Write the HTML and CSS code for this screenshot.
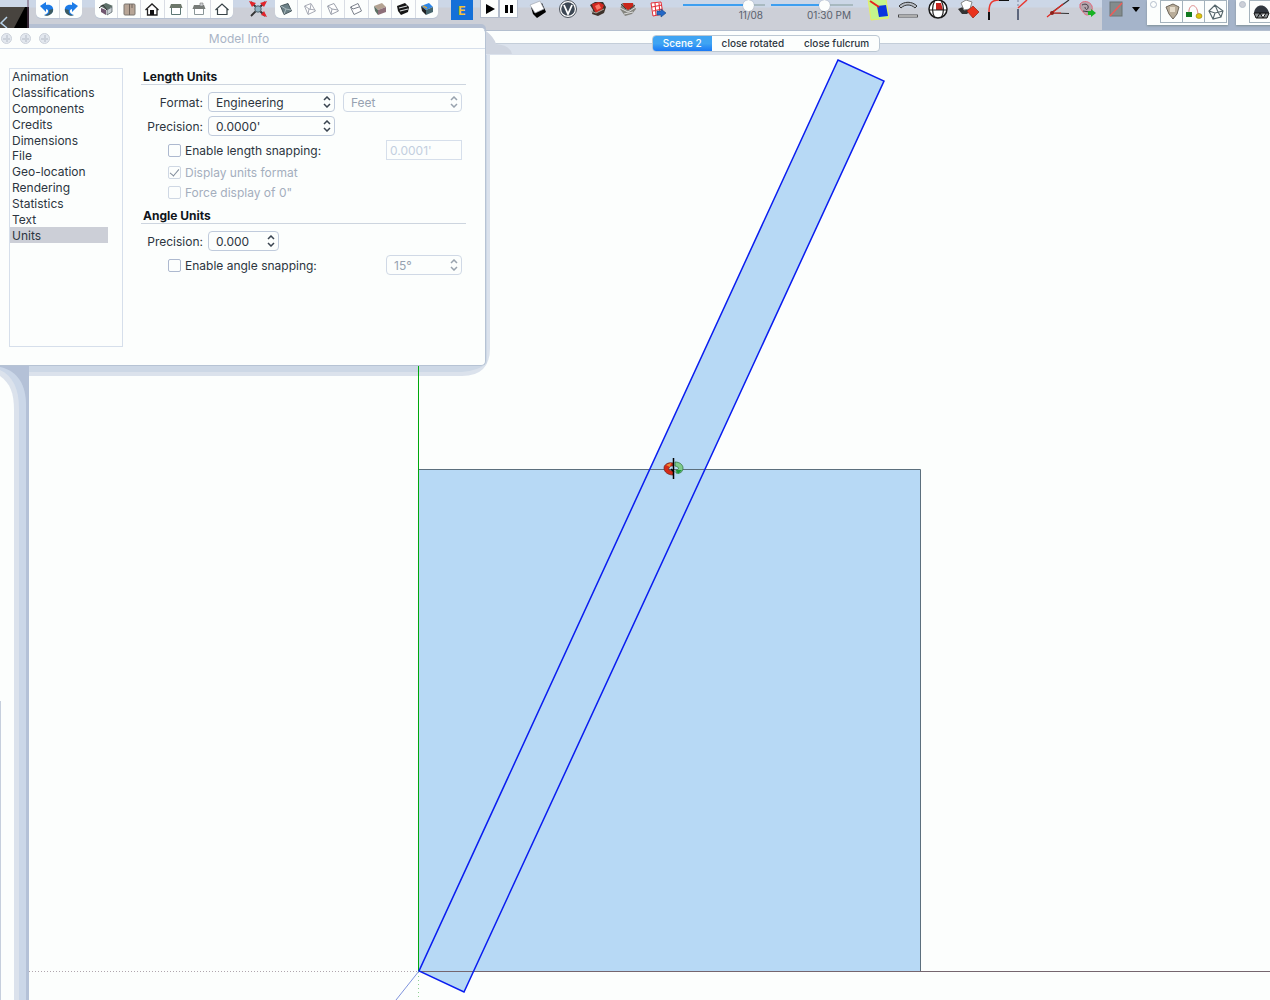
FILE: index.html
```html
<!DOCTYPE html>
<html lang="en">
<head>
  <meta charset="UTF-8" />
  <title>Model Info</title>
  <link rel="stylesheet" href="styles.css">
</head>
<body>
  <header class="toolbar">
    <button class="corner" aria-label="Back">
      <svg width="29" height="28" viewBox="0 0 29 28"><path d="M0 7H29V28H0z" fill="#000"/><path d="M0 7H25L14 28H0z" fill="#48443f"/><path d="M7 17L1 23L7 28" fill="none" stroke="#b9d3ea" stroke-width="1.5"/><path d="M28 0V28" stroke="#6b4a68"/></svg>
    </button>

    <div class="group undo">
      <button aria-label="Undo"><svg width="16" height="16" viewBox="0 0 16 16"><path d="M1 5L7 1V4C12 3 15 6 14 10C13 13 9 15 5 14C9 13 11 9 7 8V11z" fill="#1b7be8"/><path d="M14 8C15 12 10 16 5 14.500C9 14 11 12 10 9" fill="#3d5b60"/></svg></button>
      <button aria-label="Redo"><svg width="16" height="16" viewBox="0 0 16 16"><path d="M15 5L9 1V4C4 3 1 6 2 10C3 13 7 15 11 14C7 13 5 9 9 8V11z" fill="#1b7be8"/><path d="M2 8C1 12 6 16 11 14.500C7 14 5 12 6 9" fill="#3d5b60"/></svg></button>
    </div>

    <div class="group views">
      <button aria-label="Iso"><svg width="16" height="16" viewBox="0 0 16 16"><path d="M2 5L8 2L15 5L9 9z" fill="#5d7068"/><path d="M3 7V11L8 14V9z" fill="#705770"/><path d="M9 9L14 6V11L9 14z" fill="#c9d0d4" stroke="#47565a" stroke-width=".7"/><path d="M1 7L5 4L9 9" fill="none" stroke="#333"/></svg></button>
      <button aria-label="Top"><svg width="16" height="16" viewBox="0 0 16 16"><rect x="3" y="3" width="11" height="11" rx="1" fill="#b7a596" stroke="#7b7770"/><path d="M8.500 3V14M11 3V7" stroke="#71665e"/></svg></button>
      <button aria-label="Front"><svg width="16" height="16" viewBox="0 0 16 16"><path d="M1.500 9L8 3L14.500 9M3.500 8V14H13V8" fill="#fff" stroke="#222" stroke-width="1.300"/><path d="M6 14V9H10V14z" fill="#111"/></svg></button>
      <button aria-label="Right"><svg width="16" height="16" viewBox="0 0 16 16"><path d="M3 3H13L14.500 7H1.500z" fill="#6c776a"/><path d="M3.500 7V13.500H12.500V7" fill="#fff" stroke="#5c7774"/></svg></button>
      <button aria-label="Back view"><svg width="16" height="16" viewBox="0 0 16 16"><path d="M3 4H13L14.500 8H1.500z" fill="#777c78"/><path d="M9 2H12V5H9z" fill="#cfd3d4" stroke="#777" stroke-width=".6"/><path d="M3.500 8V13.500H12.500V8" fill="#fff" stroke="#8a9798"/></svg></button>
      <button aria-label="Left"><svg width="16" height="16" viewBox="0 0 16 16"><path d="M1.500 9L8 3L14.500 9M3.500 8V13.500H13V8" fill="#fff" stroke="#374347" stroke-width="1.200"/></svg></button>
    </div>

    <button class="extents" aria-label="Zoom extents"><svg width="18" height="18" viewBox="0 0 18 18"><path d="M2 16L7 11M16 16L11 11M2 2L7 7M16 2L11 7" stroke="#333" stroke-width="1.800"/><path d="M0 1L7 3L3 7zM18 1L11 3L15 7zM18 17L12 15L15 11z" fill="#e3252b"/><circle cx="9" cy="9" r="3.200" fill="#8fb2c2" stroke="#53656f"/></svg></button>

    <div class="group styles">
      <button aria-label="X-ray"><svg width="16" height="16" viewBox="0 0 16 16"><path d="M2.500 5L10 2.500L13.500 10L6 13.500z" fill="#6c8187" stroke="#48585d"/><path d="M3 5L8 8L13 9M8 8L6 13" fill="none" stroke="#a9b9bd"/></svg></button>
      <button aria-label="Back edges"><svg width="16" height="16" viewBox="0 0 16 16"><path d="M2.500 5L9 2.500L13.500 10L6 13.500zM3 5L7 8L13 9M7 8L6 13M9 3L8 9" fill="#fff" stroke="#a7abb5"/></svg></button>
      <button aria-label="Wireframe"><svg width="16" height="16" viewBox="0 0 16 16"><path d="M2.500 5L9 2.500L13.500 10L6 13.500zM3 5L7 8L13 9M7 8L6 13" fill="#fff" stroke="#9da2ad"/></svg></button>
      <button aria-label="Hidden line"><svg width="16" height="16" viewBox="0 0 16 16"><path d="M2.500 6L10 2.500L13.500 10L6 13.500zM3 6L5 8L11 6" fill="#fff" stroke="#7c828c"/></svg></button>
      <button aria-label="Shaded"><svg width="16" height="16" viewBox="0 0 16 16"><path d="M2 5L10 2L14 6L6 9z" fill="#b4a392"/><path d="M2 5L6 9V14L3 10z" fill="#5d7064"/><path d="M6 9L14 6V11L6 14z" fill="#8d6f79"/></svg></button>
      <button aria-label="Textured"><svg width="16" height="16" viewBox="0 0 16 16"><path d="M2 5L10 2L14 6L13 11L6 14L3 10z" fill="#151515"/><path d="M4 7L12 5M5 10L13 8" stroke="#d5d8d9" stroke-width="1.200"/></svg></button>
      <button aria-label="Monochrome"><svg width="16" height="16" viewBox="0 0 16 16"><path d="M2 5L10 2L14 6L7 9z" fill="#2c86e8"/><path d="M2 5L7 9V14L3 10z" fill="#222"/><path d="M7 9L14 6V11L7 14z" fill="#47666d"/><path d="M4 5L8 7" stroke="#c9a44d" stroke-width="1.500"/></svg></button>
    </div>

    <button class="ext-e">E</button>
    <div class="player">
      <button aria-label="Play"><svg width="10" height="10" viewBox="0 0 10 10"><path d="M1 0L10 5L1 10z" fill="#000"/></svg></button>
      <button aria-label="Pause"><svg width="10" height="10" viewBox="0 0 10 10"><path d="M1 1H4V9H1zM6 1H9V9H6z" fill="#000"/></svg></button>
    </div>

    <div class="tools">
      <button aria-label="Eraser"><svg width="20" height="20" viewBox="0 0 20 20"><path d="M3 7L14 3L18 12L9 18L5 14z" fill="#000"/><path d="M2 5L12 1L16 9L7 13z" fill="#fff" stroke="#a4a9b3" stroke-width=".7"/></svg></button>
      <button aria-label="V-Ray"><svg width="20" height="20" viewBox="0 0 20 20"><circle cx="10" cy="9" r="8.500" fill="#fff" stroke="#4a525c"/><circle cx="10" cy="9" r="6.800" fill="#3c4754"/><path d="M6 5L10 14L14 5" fill="none" stroke="#fff" stroke-width="1.800"/></svg></button>
      <button aria-label="Render"><svg width="20" height="20" viewBox="0 0 20 20"><path d="M2 5L7 2L15 2L18 7L16 13L10 16L4 14L5 10z" fill="#3d322b"/><path d="M4 4L11 2L16 5L14 10L8 13L5 8z" fill="#d02821"/><path d="M7 6L11 4L13 8L9 10z" fill="#fa7866"/><path d="M3 11L8 13L16 9" fill="none" stroke="#a9a59a"/></svg></button>
      <button aria-label="Render region"><svg width="20" height="20" viewBox="0 0 20 20"><path d="M2 9L4 3L15 3L18 9L14 14L7 16z" fill="#84857f"/><path d="M5 3L15 3L15 7L10 10L6 7z" fill="#c9261b"/><path d="M2 8L10 12L18 7M6 14L15 12" fill="none" stroke="#ddd"/><path d="M3 4L8 9M12 9L17 5" stroke="#40403c"/></svg></button>
      <button aria-label="Export"><svg width="20" height="20" viewBox="0 0 20 20"><path d="M3 3L13 2L15 14L5 16z" fill="#fff" stroke="#e22f38"/><path d="M4 7L14 5M5 11L14 9M7 3L8 15M11 3L12 14" stroke="#e22f38" stroke-width="1.100"/><path d="M9 11H13V9L18 13L13 17V15H9z" fill="#2368c7" stroke="#174682" stroke-width=".6"/></svg></button>
    </div>

    <div class="shadow-sliders">
      <label><input type="range" min="0" max="100" value="85" style="--fill: 81%">11/08</label>
      <label><input type="range" min="0" max="100" value="68" style="--fill: 66%">01:30 PM</label>
    </div>

    <div class="tools">
      <button aria-label="Texture position"><svg width="22" height="22" viewBox="0 0 22 22"><path d="M1 0H19L22 19L4 21z" fill="#c4f58c" stroke="#e5ee67"/><path d="M10 7L19 6L21 17L12 18z" fill="#0b35df"/><path d="M3 2L12 8" stroke="#e6251f" stroke-width="2"/></svg></button>
      <button aria-label="Offset arcs"><svg width="22" height="20" viewBox="0 0 22 20"><path d="M2 6C7 1 15 1 20 6L18 8C14 4 8 4 4 8z" fill="#b9bec6" stroke="#333"/><rect x="1.500" y="15" width="19" height="2" fill="#fff" stroke="#333" stroke-width=".8"/></svg></button>
      <button aria-label="Globe"><svg width="22" height="20" viewBox="0 0 22 20"><circle cx="11" cy="9" r="9" fill="#fff" stroke="#171717" stroke-width="1.500"/><path d="M9 3H14L16 10H9z" fill="#c6231e"/><path d="M8 0C5 6 5 13 8 18M14 0C17 6 17 13 14 18M2 10H20" fill="none" stroke="#222" stroke-width="1.200"/></svg></button>
      <button aria-label="Extrude"><svg width="22" height="20" viewBox="0 0 22 20"><path d="M1 9L8 6L14 10L10 14H5z" fill="#333"/><path d="M4 3L9 0L15 2L13 9L7 10z" fill="#fff" stroke="#888"/><path d="M10 11L16 6L22 12L16 18z" fill="#e9321c" stroke="#8e2416" stroke-width=".7"/></svg></button>
      <button aria-label="Round corner"><svg width="22" height="20" viewBox="0 0 22 20"><path d="M2 20V12M12 0H22" stroke="#111" stroke-width="2"/><path d="M2 12C2 4 4 0 12 0" fill="none" stroke="#e83a32" stroke-width="1.500"/></svg></button>
      <button aria-label="Chamfer"><svg width="22" height="20" viewBox="0 0 22 20"><path d="M1 20V9" stroke="#39435e" stroke-width="1.500"/><path d="M1 8L10 0" stroke="#e83a32" stroke-width="1.500"/><path d="M1 0V6" stroke="#7b849d" stroke-dasharray="2 2"/></svg></button>
      <button aria-label="Angle"><svg width="24" height="20" viewBox="0 0 24 20"><path d="M5 13L23 0M5 13L23 13.500" stroke="#333" stroke-width="1.200"/><path d="M1 17L17 4M5 13H15" stroke="#e12821" stroke-width="1.200"/><circle cx="6" cy="13" r="2" fill="#8c1f18"/></svg></button>
      <button aria-label="Spiral"><svg width="20" height="20" viewBox="0 0 20 20"><path d="M2 4C5 0 12 1 14 6C15 10 13 15 9 15C6 15 4 10 2 8z" fill="#b5a5ac" stroke="#e56b7c"/><path d="M4 5C8 3 11 5 10 8C9 11 7 9 7 7M5 11L12 12" fill="none" stroke="#423b45"/><path d="M10 11H13V9L18 13L13 17V15H10z" fill="#16b222"/></svg></button>
    </div>

    <div class="palette-bar">
      <button class="section" aria-label="Section"><svg width="24" height="18" viewBox="0 0 24 18"><rect x="6" y="2" width="12" height="14" fill="#838b8c" stroke="#6a7272"/><path d="M6 16L18 3" stroke="#ef5b58" stroke-width="1.500"/></svg></button>
      <button class="more" aria-label="More"><svg width="8" height="5" viewBox="0 0 8 5"><path d="M0 0H8L4 5z" fill="#000"/></svg></button>
      <div class="palette">
        <i></i>
        <button aria-label="Head"><svg width="20" height="20" viewBox="0 0 20 20"><path d="M4 5L11 2L17 5L15 12L11 17L7 12z" fill="#b9ad99" stroke="#6e675b"/><path d="M8 5H13V10H8z" fill="#e5dccb"/></svg></button>
        <button aria-label="Link"><svg width="20" height="20" viewBox="0 0 20 20"><path d="M5 11C4 2 13 0 14 12" fill="none" stroke="#dc8585"/><rect x="2" y="10" width="6" height="5" fill="#117a20"/><ellipse cx="15" cy="14" rx="3" ry="2.500" fill="#dfc40c" stroke="#8f7e18" stroke-width=".6"/></svg></button>
        <button aria-label="Mesh"><svg width="20" height="20" viewBox="0 0 20 20"><path d="M3 9L9 3L17 9L15 15L7 17zM3 9L9 11L17 9M9 3L12 10L15 15M9 11L7 17" fill="none" stroke="#54656a" stroke-width="1.100"/></svg></button>
      </div>
      <div class="palette">
        <i class="grey"></i>
        <button aria-label="Hat"><svg width="20" height="20" viewBox="0 0 20 20"><path d="M3 11C4 1 16 1 18 11z" fill="#31373f"/><path d="M3 11H18L16 16H5zM6 16L9 11L12 16L15 11" fill="#8b9194" stroke="#111"/></svg></button>
      </div>
    </div>
  </header>

  <nav class="scene-bar">
    <div class="scenes">
      <button class="active">Scene 2</button>
      <button>close rotated</button>
      <button>close fulcrum</button>
    </div>
  </nav>

  <main class="workspace">
    <svg class="model">
      <!-- dialog shadow -->
      <path d="M486 -24Q494 -18 496 -11Q510 -10 512 -1H486z" fill="#cfd5e0"/>
      <path d="M0 0H490V293Q490 321 462 321H0z" fill="#dbe2ec"/>
      <path d="M0 0H487V308Q478 316 462 317H0z" fill="#cdd8e6"/>

      <!-- tray behind the dialog -->
      <path d="M0 311H29V945H0z" fill="#b4c1d7"/>
      <path d="M0 312C18 316 26 330 26 350V945H0z" fill="#cbd7e8"/>
      <path d="M0 315C13 321 19 334 19 354V945H0z" fill="#dbe2ec"/>
      <path d="M0 321C10 328 14 338 14 355V945H0z" fill="#fcfefd"/>
      <path d="M.5 646V945" stroke="#c6cfdd"/>

      <!-- faces -->
      <path d="M838 5L884 26L464 937L419 916z" fill="#b7d9f5"/>
      <path d="M418.500 414.500H920.500V916.500H418.500z" fill="#b7d9f5" stroke="#5c6f7d"/>

      <!-- axes -->
      <line x1="29" y1="916.500" x2="418" y2="916.500" stroke="#b0a6ae" stroke-dasharray="1 2"/>
      <line x1="419" y1="916.500" x2="100%" y2="916.500" stroke="#75666f"/>
      <line x1="418.500" y1="311" x2="418.500" y2="916" stroke="#00a80b"/>
      <line x1="418.500" y1="917" x2="418.500" y2="945" stroke="#8fd093" stroke-dasharray="1 3"/>
      <line x1="419" y1="916" x2="396" y2="945" stroke="#7f93dc"/>

      <path d="M838 5L884 26L464 937L419 916z" fill="none" stroke="#0a1df0" stroke-width="1.500"/>

      <!-- orbit cursor -->
      <g transform="translate(663 403)">
        <path d="M10 5C6 4 1 6 1 10C1 14 5 17 10 17L11 13C7 13 5 12 6 10C7 8 8 8 10 8z" fill="#d42b18" stroke="#64231b" stroke-width=".7"/>
        <path d="M3 7L8 5L7 9z" fill="#f08a35"/>
        <path d="M12 4C17 4 20 7 20 10C20 14 17 16 13 15V12C16 12 17 9 12 8z" fill="#7ecb8a" stroke="#2a6b38" stroke-width=".7"/>
        <path d="M13 12L19 12L15 16z" fill="#1d9a3a"/>
        <path d="M10.500 0V21M8 11L11 14" stroke="#000" stroke-width="1.500"/>
      </g>
    </svg>
  </main>

  <section class="dialog">
    <div class="titlebar">
      <div class="lights"><button aria-label="Close"></button><button aria-label="Minimize"></button><button aria-label="Zoom"></button></div>
      <h1>Model Info</h1>
    </div>
    <div class="content">
      <nav class="pages">
        <div class="page-list">
          <a href="#">Animation</a>
          <a href="#">Classifications</a>
          <a href="#">Components</a>
          <a href="#">Credits</a>
          <a href="#">Dimensions</a>
          <a href="#">File</a>
          <a href="#">Geo-location</a>
          <a href="#">Rendering</a>
          <a href="#">Statistics</a>
          <a href="#">Text</a>
          <a href="#" class="selected">Units</a>
        </div>
      </nav>
      <form class="units">
        <h2>Length Units</h2>
        <div class="row">
          <label class="name" for="format">Format:</label>
          <span class="select wide"><select id="format"><option>Engineering</option></select><svg width="8" height="12" viewBox="0 0 8 12"><path d="M1 4L4 1L7 4M1 8L4 11L7 8"/></svg></span>
          <span class="select feet"><select aria-label="Unit" disabled><option>Feet</option></select><svg width="8" height="12" viewBox="0 0 8 12"><path d="M1 4L4 1L7 4M1 8L4 11L7 8"/></svg></span>
        </div>
        <div class="row">
          <label class="name" for="precision">Precision:</label>
          <span class="select wide"><select id="precision"><option>0.0000'</option></select><svg width="8" height="12" viewBox="0 0 8 12"><path d="M1 4L4 1L7 4M1 8L4 11L7 8"/></svg></span>
        </div>
        <div class="row check">
          <label><input type="checkbox">Enable length snapping:</label>
          <input type="text" class="snap" aria-label="Length snap" value="0.0001'" disabled>
        </div>
        <div class="row check short off"><label><input type="checkbox" checked disabled>Display units format</label></div>
        <div class="row check short off"><label><input type="checkbox" disabled>Force display of 0"</label></div>
        <h2>Angle Units</h2>
        <div class="row">
          <label class="name" for="angle">Precision:</label>
          <span class="select small"><select id="angle"><option>0.000</option></select><svg width="8" height="12" viewBox="0 0 8 12"><path d="M1 4L4 1L7 4M1 8L4 11L7 8"/></svg></span>
        </div>
        <div class="row check">
          <label><input type="checkbox">Enable angle snapping:</label>
          <span class="select snap"><select aria-label="Angle snap" disabled><option>15°</option></select><svg width="8" height="12" viewBox="0 0 8 12"><path d="M1 4L4 1L7 4M1 8L4 11L7 8"/></svg></span>
        </div>
      </form>
    </div>
  </section>
</body>
</html>
```

FILE: styles.css
```css
* {
  box-sizing: border-box;
}
body {
  margin: 0;
  min-height: 100vh;
  display: flex;
  flex-direction: column;
  position: relative;
  overflow-x: hidden;
  background: #fcfefd;
  font-family: Inter, "Liberation Sans", sans-serif;
  font-size: 12px;
  color: #2c3540;
}
button {
  padding: 0;
  border: 0;
  background: none;
  font: inherit;
  color: inherit;
}
svg {
  display: block;
}

/* toolbar */
.toolbar {
  display: flex;
  align-items: flex-start;
  height: 31px;
  overflow: hidden;
  background: linear-gradient(#ccd7e7 7px, #cccfd7 8px);
  border-bottom: 1px solid #b4bfcf;
}
.toolbar > * {
  flex-shrink: 0;
}
.toolbar button {
  display: flex;
  align-items: center;
  justify-content: center;
}
.toolbar .corner {
  position: relative;
  z-index: 1;
}
.group {
  display: flex;
  height: 18px;
  background: #fcfefd;
  border-radius: 0 0 5px 5px;
  box-shadow: 0 1px 0 #b9c3d3;
}
.group button {
  flex: 1;
}
.group button + button {
  border-left: 1px solid #d9dde4;
}
.undo {
  width: 46px;
  margin-left: 7px;
}
.views {
  width: 138px;
  margin-left: 13px;
}
.extents {
  width: 18px;
  height: 18px;
  margin: 0 8px 0 16px;
}
.styles {
  width: 163px;
}
.toolbar .ext-e {
  width: 22px;
  height: 20px;
  margin-left: 13px;
  background: #1470d8;
  color: #f4c430;
  font-weight: 700;
}
.player {
  display: flex;
  margin-left: 7px;
  margin-right: 5px;
}
.player button {
  width: 19px;
  height: 18px;
  background: #fcfefd;
  border: 1px solid #b3bccb;
  border-top: 0;
}
.tools {
  display: flex;
}
.tools button {
  width: 30px;
  height: 20px;
}
.shadow-sliders {
  display: flex;
  gap: 6px;
  margin: 0 10px;
}
.shadow-sliders label {
  width: 82px;
  padding-right: 2px;
  font-size: 10px;
  line-height: 10px;
  text-align: right;
  color: #59616d;
}
.shadow-sliders input {
  appearance: none;
  display: block;
  width: 82px;
  height: 10px;
  margin: 0;
  background: linear-gradient(90deg, #3d9ff0 var(--fill), #a8b9c0 var(--fill)) center / 100% 2px no-repeat;
}
.shadow-sliders input::-webkit-slider-thumb {
  appearance: none;
  width: 11px;
  height: 11px;
  border-radius: 50%;
  background: #fcfefd;
  box-shadow: 0 0 1px #7f8ba0;
}
.palette-bar {
  display: flex;
  flex: 1;
  align-items: flex-start;
  height: 30px;
  margin-left: -1px;
  background: #a5b4ca;
}
.section {
  width: 27px;
  height: 18px;
}
.more {
  width: 14px;
  height: 18px;
}
.palette {
  display: flex;
  height: 25px;
  margin-left: 4px;
  padding-right: 2px;
  background: #fcfefd;
  box-shadow: 0 1px 2px #7f9096;
}
.palette + .palette {
  margin-left: 8px;
}
.palette i {
  width: 7px;
  height: 7px;
  margin: 1px 3px;
  border: 1px solid #b5bfcc;
  border-radius: 50%;
}
.palette .grey {
  background: #cccfd7;
}
.palette button {
  width: 23px;
  height: 23px;
  border: 1px solid #a4b3bd;
  margin-right: -1px;
}

/* scene tabs */
.scene-bar {
  display: flex;
  justify-content: center;
  align-items: center;
  height: 24px;
  padding: 0 0 0 262px;
  background: linear-gradient(#fcfefd 12px, #c4ced9 12px, #c4ced9 13px, #dbe2ec 13px);
}
.scenes {
  display: flex;
  height: 17px;
  border: 1px solid #bcc8d3;
  border-radius: 4px;
  background: #fcfefd;
  overflow: hidden;
}
.scenes button {
  padding: 0 10px;
  font-size: 10px;
  font-weight: 500;
  line-height: 15px;
}
.scenes .active {
  color: #fcfefd;
  background: linear-gradient(#3fa4f3 50%, #1a79f5);
}

.workspace {
  flex: 1;
  display: flex;
  min-height: 400px;
}
.model {
  flex: 1;
  min-width: 0;
  overflow: visible;
}

/* floating dialog */
.dialog {
  position: absolute;
  top: 28px;
  left: -8px;
  width: 494px;
  background: #fcfefd;
  border: 1px solid #b6c3d4;
  border-top-color: #fcfefd;
  border-radius: 5px;
  box-shadow: 0 -4px 0 0 #b5c0d3;
}
.titlebar {
  display: flex;
  align-items: center;
  height: 20px;
  border-bottom: 1px solid #d6dfeb;
}
.lights {
  display: flex;
  gap: 8px;
  width: 60px;
  padding-left: 8px;
}
.lights button {
  width: 11px;
  height: 11px;
  border-radius: 50%;
  border: 1px solid #cbd1da;
  background: linear-gradient(#cbd1da, #cbd1da) center / 7px 2px no-repeat, linear-gradient(#cbd1da, #cbd1da) center / 2px 7px no-repeat, #e3e8ef;
}
h1 {
  flex: 1;
  margin: 0 60px 0 0;
  font-size: 12px;
  font-weight: 400;
  text-align: center;
  color: #a9b4c6;
}
.content {
  display: flex;
  gap: 18px;
  padding: 19px 19px 18px 16px;
}
.pages {
  width: 114px;
  height: 279px;
  border: 1px solid #d6dfeb;
}
.page-list {
  display: flex;
  flex-direction: column;
  height: 174px;
}
.page-list a {
  flex: 1;
  display: flex;
  align-items: center;
  width: 98px;
  padding-left: 2px;
  color: inherit;
  text-decoration: none;
}
.page-list .selected {
  background: #cccfd7;
}
.units {
  flex: 1;
}
h2 {
  margin: 0 0 7px;
  padding-left: 2px;
  height: 17px;
  border-bottom: 1px solid #cdd5df;
  font-size: 12px;
  font-weight: 700;
  line-height: 17px;
  color: #10151b;
}
.row + h2 {
  margin-top: 7px;
}
.row {
  display: flex;
  align-items: center;
  height: 20px;
  margin-bottom: 4px;
}
.name {
  width: 67px;
  padding-right: 5px;
  text-align: right;
}
.select {
  position: relative;
}
.select svg {
  position: absolute;
  top: 4px;
  right: 4px;
  fill: none;
  stroke: #3a4450;
  stroke-width: 1.500;
  pointer-events: none;
}
.select select {
  appearance: none;
  display: block;
  width: 100%;
  height: 20px;
  padding: 0 7px;
  border: 1px solid #c0cbdc;
  border-radius: 4px;
  background: #fcfefd;
  font: inherit;
  color: inherit;
}
.select select:disabled {
  opacity: 1;
  border-color: #d0d9e6;
  color: #97a2b1;
}
.select select:disabled + svg {
  stroke: #98a2ae;
}
.wide {
  width: 127px;
}
.feet {
  width: 119px;
  margin-left: 8px;
}
.small {
  width: 71px;
}
.check {
  justify-content: space-between;
  padding: 0 4px 0 27px;
}
.check label {
  display: flex;
  align-items: center;
  gap: 4px;
}
.check input[type="checkbox"] {
  appearance: none;
  width: 13px;
  height: 13px;
  margin: 0;
  border: 1px solid #adb9cf;
  border-radius: 2px;
}
.check input:checked {
  display: grid;
  place-items: center;
}
.check input:checked::after {
  content: "";
  width: 4px;
  height: 8px;
  margin-bottom: 2px;
  border: solid #7f8b9a;
  border-width: 0 1px 1px 0;
  transform: rotate(40deg);
}
.short {
  height: 16px;
}
.off {
  color: #a4aebd;
}
.off input[type="checkbox"] {
  border-color: #cfd8e4;
}
.snap {
  width: 76px;
}
input.snap {
  height: 20px;
  padding: 0 3px;
  border: 1px solid #d6dfeb;
  background: #fcfefd;
  font: inherit;
  color: #c3cfdf;
}
```
